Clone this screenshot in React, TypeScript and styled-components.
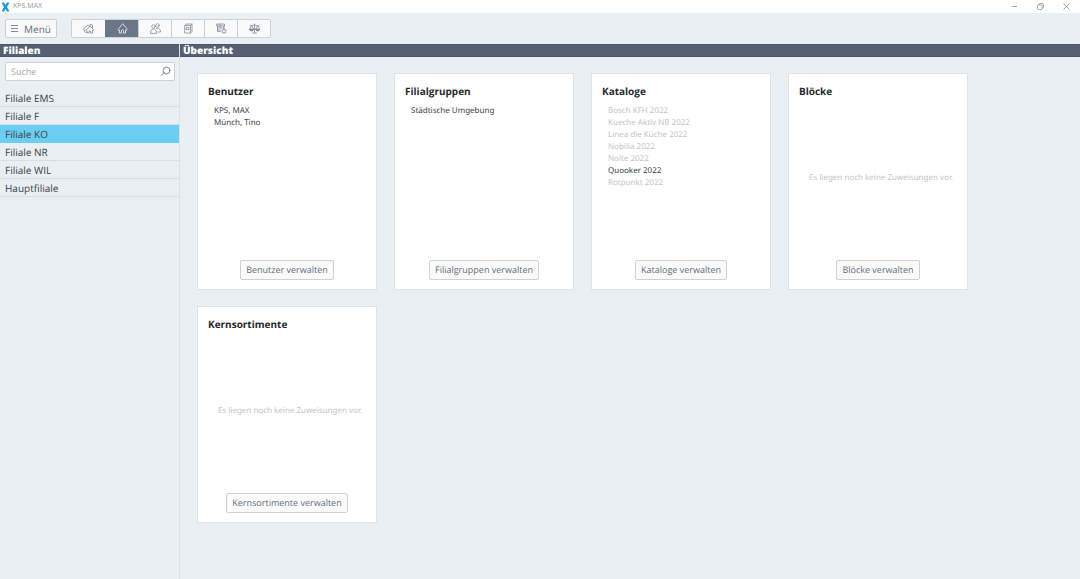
import React, { useState } from "react";
import styled, { createGlobalStyle, css } from "styled-components";

const GlobalStyle = createGlobalStyle`
  * { box-sizing: border-box; }
  html, body { margin: 0; padding: 0; background: #e9eff2; }
  body, button, input { font-family: "Open Sans", "Noto Sans", sans-serif; text-rendering: geometricPrecision; }
  h2, h3, ul, p { margin: 0; padding: 0; }
  ul { list-style: none; }
`;

const Window = styled.div`
  display: flex;
  flex-direction: column;
  min-height: 100vh;
  color: #3c4146;
`;

const TitleBar = styled.header`
  display: flex;
  align-items: center;
  justify-content: space-between;
  height: 13px;
  background: #fff;
`;

const Brand = styled.div`
  display: flex;
  align-items: center;
  gap: 3px;
  padding-left: 1px;
  font-size: 7px;
  line-height: 13px;
  color: #94989b;
`;

const WindowControls = styled.div`
  display: flex;
  gap: 14px;
  padding-right: 8px;
`;

const WindowButton = styled.button`
  display: grid;
  place-items: center;
  width: 12px;
  height: 12px;
  padding: 0;
  border: 0;
  background: none;
  color: #8b8b8b;
`;

const Toolbar = styled.nav`
  display: flex;
  align-items: center;
  gap: 14px;
  height: 31px;
  padding: 0 5px;
`;

const buttonFace = css`
  border: 1px solid #cdd1d3;
  border-radius: 2px;
  background: #fafafa;
  color: #62707f;
`;

const MenuButton = styled.button`
  ${buttonFace}
  display: flex;
  align-items: center;
  justify-content: center;
  gap: 6px;
  width: 52px;
  height: 19px;
  padding: 0;
  font-size: 10px;
  line-height: 16px;
`;

const Tabs = styled.div`
  ${buttonFace}
  display: flex;
  height: 19px;
`;

const Tab = styled.button<{ $active: boolean }>`
  display: grid;
  place-items: center;
  width: 33px;
  padding: 0;
  border: 0;
  border-left: 1px solid ${(p) => (p.$active ? "#6a7789" : "#cdd1d3")};
  background: ${(p) => (p.$active ? "#6a7789" : "transparent")};
  color: ${(p) => (p.$active ? "#f4f6f8" : "#7b8794")};
  &:first-child { border-left: 0; }
`;

const Columns = styled.div`
  display: flex;
  flex: 1;
`;

const Sidebar = styled.aside`
  flex: none;
  width: 180px;
  border-right: 1px solid #dce1e4;
`;

const Main = styled.main`
  flex: 1;
  min-width: 0;
`;

const SectionHeader = styled.h2`
  height: 13px;
  padding-left: 3px;
  border-bottom: 1px solid #4b5767;
  border-top: 1px solid #4b5767;
  background: #556172;
  color: #fff;
  font-size: 10px;
  font-weight: 800;
  line-height: 11px;
`;

const SearchBox = styled.label`
  display: flex;
  align-items: center;
  height: 19px;
  margin: 5px 4px 8px 5px;
  padding: 0 3px 0 5px;
  border: 1px solid #cdd1d3;
  border-radius: 2px;
  background: #fff;
  color: #62707f;
`;

const SearchInput = styled.input`
  flex: 1;
  min-width: 0;
  padding: 0;
  border: 0;
  outline: 0;
  background: none;
  font-size: 9px;
  line-height: 16px;
  color: #3c4146;
  &::placeholder { color: #a3a6a8; opacity: 1; }
`;

const BranchButton = styled.button<{ $selected: boolean }>`
  display: block;
  width: 100%;
  height: 18px;
  padding: 1px 5px 0;
  border: 0;
  border-bottom: 1px solid ${(p) => (p.$selected ? "#6ccdf3" : "#d9dee1")};
  background: ${(p) => (p.$selected ? "#6ccdf3" : "transparent")};
  color: #3c4146;
  font-size: 10px;
  line-height: 16px;
  text-align: left;
`;

const CardGrid = styled.div`
  display: grid;
  grid-template-columns: repeat(auto-fill, 180px);
  gap: 16px 17px;
  padding: 16px 17px;
`;

const Card = styled.section`
  display: flex;
  flex-direction: column;
  align-items: center;
  min-height: 217px;
  padding: 9px 10px;
  border: 1px solid #e0e3e5;
  background: #fff;
`;

const CardTitle = styled.h3`
  align-self: stretch;
  color: #26292c;
  font-size: 10px;
  font-weight: 700;
  line-height: 16px;
`;

const Entries = styled.ul`
  flex: 1;
  align-self: stretch;
  padding: 6px;
  font-family: "Noto Sans", "Open Sans", sans-serif;
  font-size: 8px;
  line-height: 12px;
`;

const Entry = styled.li<{ $muted: boolean }>`
  color: ${(p) => (p.$muted ? "#c3c5c7" : "#3c4146")};
`;

const EmptyNote = styled.p`
  display: flex;
  flex: 1;
  align-items: center;
  padding: 0 0 4px 6px;
  color: #c3c5c7;
  font-family: "Noto Sans", "Open Sans", sans-serif;
  font-size: 8px;
  line-height: 12px;
  white-space: nowrap;
`;

const ManageButton = styled.button`
  ${buttonFace}
  height: 20px;
  padding: 0 5px;
  font-size: 9px;
  line-height: 18px;
  white-space: nowrap;
`;

const Icon = ({ children }: { children: React.ReactNode }) => (
  <svg width="11" height="11" viewBox="0 0 22 22" fill="none" stroke="currentColor"
    strokeWidth="1.5" strokeLinecap="round" strokeLinejoin="round" aria-hidden="true">
    {children}
  </svg>
);

const GroupIcon = () => (
  <Icon>
    <path d="M8 19c-3 1-5-1-5-5-2 0-3-2-1-3l8-7 3 2" />
    <path d="M8 12l6-6 7 7-1 2-1-1v6h-4v-4h-3v4H8v-5l-2-1zM14 6l1-4 4 2v6" />
  </Icon>
);
const HomeIcon = () => (
  <Icon><path d="M11 2L2 13l1 2 2-1v6h4v-5c0-2 4-2 4 0v5h4v-6l2 1 1-2z" /></Icon>
);
const UsersIcon = () => (
  <Icon>
    <circle cx="7" cy="7" r="3.5" /><circle cx="15" cy="5" r="3.5" />
    <path d="M1 20c0-5 2-8 6-8s6 3 6 8zM13 11c5-2 8 2 8 7h-5" />
  </Icon>
);
const CatalogIcon = () => (
  <Icon>
    <path d="M4 5l2-3h12v15l-3 3H4zM4 5h11v15M15 5l3-3M7 9h5v4H7z" />
  </Icon>
);
const BlocksIcon = () => (
  <Icon>
    <path d="M2 2h15v4H2zM3 6v4h13V6M3 10v7h6M3 14h6M5 4h5M6 8h4" />
    <path d="M16 11l1.5 3 3.5.5-2.5 2.5.5 3.5-3-1.5-3 1.5.5-3.5-2.5-2.5 3.500-.5z" />
  </Icon>
);
const ScaleIcon = () => (
  <Icon>
    <path d="M11 2v17M7 20h8M2 6c4 0 6-2 9-2s5 2 9 2M5 6l-4 7h8zM17 6l-4 7h8z" />
    <path d="M1 13c1 4 7 4 8 0zM13 13c1 4 7 4 8 0z" fill="currentColor" />
  </Icon>
);

const tabs = [
  { label: "Filialgruppen", icon: <GroupIcon /> },
  { label: "Filialen", icon: <HomeIcon /> },
  { label: "Benutzer", icon: <UsersIcon /> },
  { label: "Kataloge", icon: <CatalogIcon /> },
  { label: "Blöcke", icon: <BlocksIcon /> },
  { label: "Kernsortimente", icon: <ScaleIcon /> },
];

const branches = ["Filiale EMS", "Filiale F", "Filiale KO", "Filiale NR", "Filiale WIL", "Hauptfiliale"];

type CardData = { title: string; entries: { name: string; muted?: boolean }[] };

const cards: CardData[] = [
  { title: "Benutzer", entries: [{ name: "KPS, MAX" }, { name: "Münch, Tino" }] },
  { title: "Filialgruppen", entries: [{ name: "Städtische Umgebung" }] },
  {
    title: "Kataloge",
    entries: [
      { name: "Bosch KFH 2022", muted: true },
      { name: "Kueche Aktiv NB 2022", muted: true },
      { name: "Linea die Küche 2022", muted: true },
      { name: "Nobilia 2022", muted: true },
      { name: "Nolte 2022", muted: true },
      { name: "Quooker 2022" },
      { name: "Rotpunkt 2022", muted: true },
    ],
  },
  { title: "Blöcke", entries: [] },
  { title: "Kernsortimente", entries: [] },
];

export default function App() {
  const [tab, setTab] = useState("Filialen");
  const [branch, setBranch] = useState("Filiale KO");
  const [query, setQuery] = useState("");
  const visible = branches.filter((b) => b.toLowerCase().includes(query.toLowerCase()));

  return (
    <>
      <GlobalStyle />
      <Window>
        <TitleBar>
          <Brand>
            <svg width="9" height="10" viewBox="0 0 18 20" aria-hidden="true">
              <path d="M1 1h5l3 5 3-5h5l-5 9 5 9h-5l-3-5-3 5H1l5-9z" fill="#1c9ad6" />
            </svg>
            KPS.MAX
          </Brand>
          <WindowControls>
            <WindowButton aria-label="Minimieren">
              <svg width="7" height="7" viewBox="0 0 7 7"><path d="M1 3.5h5" stroke="currentColor" strokeWidth=".8" /></svg>
            </WindowButton>
            <WindowButton aria-label="Wiederherstellen">
              <svg width="7" height="7" viewBox="0 0 14 14" fill="none" stroke="currentColor" strokeWidth="1.5">
                <rect x="1" y="4" width="9" height="9" rx="2" />
                <path d="M4 4V3q0-2 2-2h4q3 0 3 3v4q0 2-2 2h-1" />
              </svg>
            </WindowButton>
            <WindowButton aria-label="Schließen">
              <svg width="7" height="7" viewBox="0 0 7 7"><path d="M.5.5l6 6M6.5.5l-6 6" stroke="currentColor" strokeWidth=".8" /></svg>
            </WindowButton>
          </WindowControls>
        </TitleBar>

        <Toolbar>
          <MenuButton>
            <svg width="7" height="7" viewBox="0 0 7 7" aria-hidden="true">
              <path d="M0 .5h7M0 3.5h7M0 6.5h7" stroke="currentColor" strokeWidth=".8" />
            </svg>
            Menü
          </MenuButton>
          <Tabs>
            {tabs.map((t) => (
              <Tab key={t.label} $active={t.label === tab} aria-label={t.label} onClick={() => setTab(t.label)}>
                {t.icon}
              </Tab>
            ))}
          </Tabs>
        </Toolbar>

        <Columns>
          <Sidebar>
            <SectionHeader>Filialen</SectionHeader>
            <SearchBox>
              <SearchInput
                aria-label="Suche"
                placeholder="Suche"
                value={query}
                onChange={(e) => setQuery(e.target.value)}
              />
              <svg width="11" height="11" viewBox="0 0 22 22" fill="none" stroke="currentColor"
                strokeWidth="1.6" strokeLinecap="round" aria-hidden="true">
                <circle cx="13" cy="9" r="7" /><path d="M8 14l-6 5" />
              </svg>
            </SearchBox>
            <ul>
              {visible.map((b) => (
                <li key={b}>
                  <BranchButton $selected={b === branch} onClick={() => setBranch(b)}>{b}</BranchButton>
                </li>
              ))}
            </ul>
          </Sidebar>

          <Main>
            <SectionHeader>Übersicht</SectionHeader>
            <CardGrid>
              {cards.map((c) => (
                <Card key={c.title}>
                  <CardTitle>{c.title}</CardTitle>
                  {c.entries.length > 0 ? (
                    <Entries>
                      {c.entries.map((e) => <Entry key={e.name} $muted={!!e.muted}>{e.name}</Entry>)}
                    </Entries>
                  ) : (
                    <EmptyNote>Es liegen noch keine Zuweisungen vor.</EmptyNote>
                  )}
                  <ManageButton>{c.title} verwalten</ManageButton>
                </Card>
              ))}
            </CardGrid>
          </Main>
        </Columns>
      </Window>
    </>
  );
}
